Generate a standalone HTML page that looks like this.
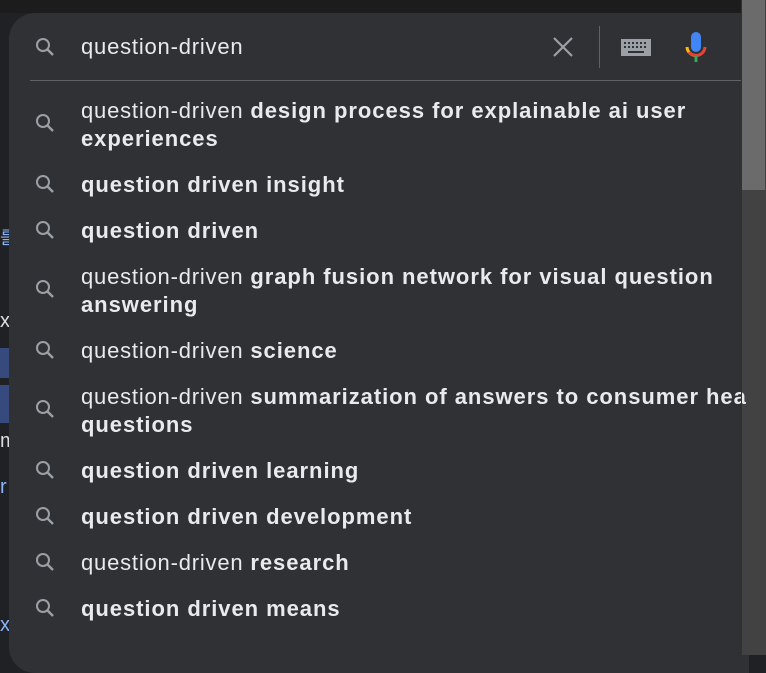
<!DOCTYPE html>
<html><head><meta charset="utf-8"><style>
*{margin:0;padding:0;box-sizing:border-box}
body{width:766px;height:655px;background:#202124;overflow:hidden;position:relative;font-family:"Liberation Sans",Arial,"Noto Sans CJK KR",sans-serif}
.topbar{position:absolute;left:0;top:0;width:741px;height:13px;background:#1c1c1c}
.pop{position:absolute;left:9px;top:13px;width:740px;height:660px;background:#303134;border-radius:26px 0 0 26px}
.sb{position:absolute;left:741px;top:0;width:25px;height:655px;background:#424242}
.thumb{position:absolute;left:741px;top:0;width:24px;height:190px;background:#6b6b6b}
.q{position:absolute;left:81px;top:34px;font-size:22px;letter-spacing:0.8px;color:#e8eaed}
.div{position:absolute;left:30px;top:80px;width:711px;height:1px;background:#5f6368}
.row{position:absolute;left:81px;font-size:22px;letter-spacing:0.8px;color:#e8eaed;line-height:28px;white-space:nowrap}
.row b{font-weight:bold;letter-spacing:0.95px}
.ic{position:absolute;left:33px}
.frag{position:absolute;left:0;width:9px}
</style></head><body>
<div class="topbar"></div>
<div class="frag" style="top:224px;height:22px;color:#8ab4f8;font-size:18px;overflow:hidden">를</div>
<div class="frag" style="top:310px;height:26px;color:#ddd;font-size:20px;overflow:hidden">x</div>
<div class="frag" style="top:348px;height:30px;background:#374a7e"></div>
<div class="frag" style="top:385px;height:38px;background:#374a7e"></div>
<div class="frag" style="top:430px;height:26px;color:#ddd;font-size:20px;overflow:hidden">m</div>
<div class="frag" style="top:476px;height:26px;color:#8ab4f8;font-size:20px;overflow:hidden">r</div>
<div class="frag" style="top:614px;height:26px;color:#8ab4f8;font-size:20px;overflow:hidden">x</div>
<div class="pop"></div>
<div class="sb"></div><div class="thumb"></div>
<svg class="ic" style="top:35px" width="24" height="24" viewBox="0 0 24 24"><circle cx="10" cy="10" r="6" fill="none" stroke="#9aa0a6" stroke-width="2"/><path d="M14.5 14.5L20 20" stroke="#9aa0a6" stroke-width="2.4"/></svg>
<div class="q">question-driven</div>
<svg style="position:absolute;left:552px;top:36px" width="22" height="22" viewBox="0 0 22 22"><path d="M2 2L20 20M20 2L2 20" stroke="#9aa0a6" stroke-width="2.2"/></svg>
<div style="position:absolute;left:599px;top:26px;width:1px;height:42px;background:#5f6368"></div>
<svg style="position:absolute;left:621px;top:39px" width="30" height="18" viewBox="0 0 30 18"><rect width="30" height="17" fill="#9aa0a6"/><g fill="#303134"><rect x="3" y="3" width="2" height="2"/><rect x="7" y="3" width="2" height="2"/><rect x="11" y="3" width="2" height="2"/><rect x="15" y="3" width="2" height="2"/><rect x="19" y="3" width="2" height="2"/><rect x="23" y="3" width="2" height="2"/><rect x="3" y="7" width="2" height="2"/><rect x="7" y="7" width="2" height="2"/><rect x="11" y="7" width="2" height="2"/><rect x="15" y="7" width="2" height="2"/><rect x="19" y="7" width="2" height="2"/><rect x="23" y="7" width="2" height="2"/><rect x="7" y="12" width="16" height="2"/></g></svg>
<svg style="position:absolute;left:684px;top:31px" width="24" height="32" viewBox="0 0 24 32"><rect x="7" y="1" width="10" height="20" rx="5" fill="#4285f4"/><path d="M3 16a9 9 0 0 0 9 8.5" fill="none" stroke="#fbbc04" stroke-width="3"/><path d="M21 16a9 9 0 0 1-9 8.5a9 9 0 0 1-7-3.5" fill="none" stroke="#ea4335" stroke-width="3"/><rect x="10.5" y="25" width="3" height="6" fill="#34a853"/></svg>
<div class="div"></div>
<div id="rows"></div>
<script>
var R=[[97,123,'question-driven <b>design process for explainable ai user</b><br><b>experiences</b>'],
[171,184,'<b>question driven insight</b>'],
[217,230,'<b>question driven</b>'],
[263,289,'question-driven <b>graph fusion network for visual question</b><br><b>answering</b>'],
[337,350,'question-driven <b>science</b>'],
[383,409,'question-driven <b>summarization of answers to consumer hea</b><br><b>questions</b>'],
[457,470,'<b>question driven learning</b>'],
[503,516,'<b>question driven development</b>'],
[549,562,'question-driven <b>research</b>'],
[595,608,'<b>question driven means</b>']];
var h='';R.forEach(function(r){h+='<svg class="ic" style="top:'+(r[1]-12)+'px" width="24" height="24" viewBox="0 0 24 24"><circle cx="10" cy="10" r="6" fill="none" stroke="#9aa0a6" stroke-width="2"/><path d="M14.5 14.5L20 20" stroke="#9aa0a6" stroke-width="2.4"/></svg><div class="row" style="top:'+r[0]+'px">'+r[2]+'</div>';});
document.getElementById('rows').innerHTML=h;
</script>
<div style="position:absolute;left:741px;top:0;width:1px;height:655px;background:#303134"></div>
</body></html>
